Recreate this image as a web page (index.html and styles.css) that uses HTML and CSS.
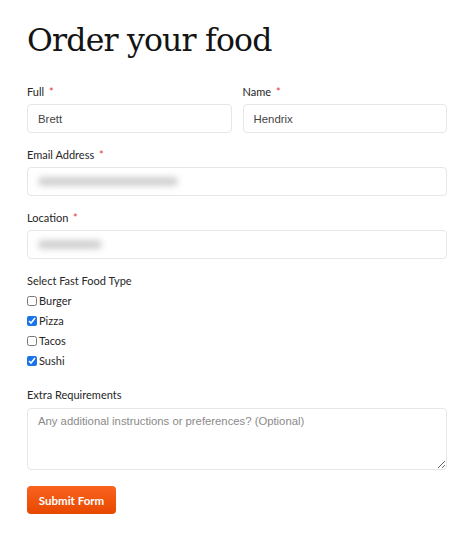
FILE: index.html
```html
<!DOCTYPE html>
<html lang="en">
<head>
<meta charset="utf-8">
<title>Order your food</title>
<link rel="stylesheet" href="styles.css">
</head>
<body>
<main class="page">
  <h1 class="title">Order your food</h1>
  <form class="form">
    <div class="row">
      <div class="field">
        <label class="label">Full <span class="req">*</span></label>
        <input class="input" type="text" value="Brett">
      </div>
      <div class="field">
        <label class="label">Name <span class="req">*</span></label>
        <input class="input" type="text" value="Hendrix">
      </div>
    </div>
    <div class="field">
      <label class="label">Email Address <span class="req">*</span></label>
      <div class="input blurred-box"><span class="blur blur-email"></span></div>
    </div>
    <div class="field">
      <label class="label">Location <span class="req">*</span></label>
      <div class="input blurred-box"><span class="blur blur-loc"></span></div>
    </div>
    <div class="group">
      <div class="label group-title">Select Fast Food Type</div>
      <label class="check"><input type="checkbox"> Burger</label>
      <label class="check"><input type="checkbox" checked> Pizza</label>
      <label class="check"><input type="checkbox"> Tacos</label>
      <label class="check"><input type="checkbox" checked> Sushi</label>
    </div>
    <div class="field">
      <label class="label label-extra">Extra Requirements</label>
      <textarea class="input textarea" placeholder="Any additional instructions or preferences? (Optional)"></textarea>
    </div>
    <div class="actions">
      <button class="submit" type="button">Submit Form</button>
    </div>
  </form>
</main>
</body>
</html>
```
FILE: styles.css
```css
* { box-sizing: border-box; }
body {
  margin: 0;
  background: #fff;
  color: #262626;
  font-family: "Lato", "Open Sans", sans-serif;
}
.page {
  padding: 18px 27px 0 27px;
  width: 474px;
}
.title {
  font-family: "DejaVu Serif", serif;
  font-weight: normal;
  font-size: 31.5px;
  letter-spacing: -0.8px;
  line-height: 44px;
  margin: 0 0 23px 0;
  color: #141414;
}
.form {
  display: flex;
  flex-direction: column;
  gap: 15px;
}
.row {
  display: grid;
  grid-template-columns: 1fr 1fr;
  gap: 11px;
}
.field {
  display: flex;
  flex-direction: column;
}
.label {
  font-size: 11px;
  line-height: 14px;
  margin-bottom: 5px;
  color: #262626;
}
.label-extra { margin-bottom: 6px; }
.req { color: #e23b3b; margin-left: 2px; }
.input {
  height: 29px;
  border: 1px solid #e6e6e6;
  border-radius: 4px;
  padding: 0 10px;
  font-family: "Liberation Sans", Arial, sans-serif;
  font-size: 11.4px;
  color: #444;
  background: #fff;
  width: 100%;
  outline: none;
}
.blurred-box {
  display: flex;
  align-items: center;
}
.blur {
  display: block;
  height: 9px;
  border-radius: 5px;
  background: #d0d0d0;
  filter: blur(3px);
}
.blur-email { width: 140px; }
.blur-loc { width: 64px; }
.group {
  display: flex;
  flex-direction: column;
  gap: 6px;
  margin-bottom: 5px;
}
.group-title { margin-bottom: 0; }
.check {
  display: flex;
  align-items: center;
  gap: 2px;
  font-size: 11px;
  line-height: 14px;
  color: #262626;
}
.check input {
  margin: 0;
  width: 10px;
  height: 10px;
  accent-color: #1a73e8;
}
.textarea {
  height: 62px;
  padding: 6px 10px;
  resize: vertical;
  font-size: 11.3px;
}
.textarea::placeholder { color: #8a8a8a; }
.actions { margin-top: 1px; }
.submit {
  width: 89px;
  height: 28px;
  border: none;
  border-radius: 4px;
  background: linear-gradient(#f9631e, #e84800);
  color: #fff;
  font-family: "Lato", "Open Sans", sans-serif;
  font-weight: bold;
  font-size: 11.5px;
  padding: 0;
}
```
